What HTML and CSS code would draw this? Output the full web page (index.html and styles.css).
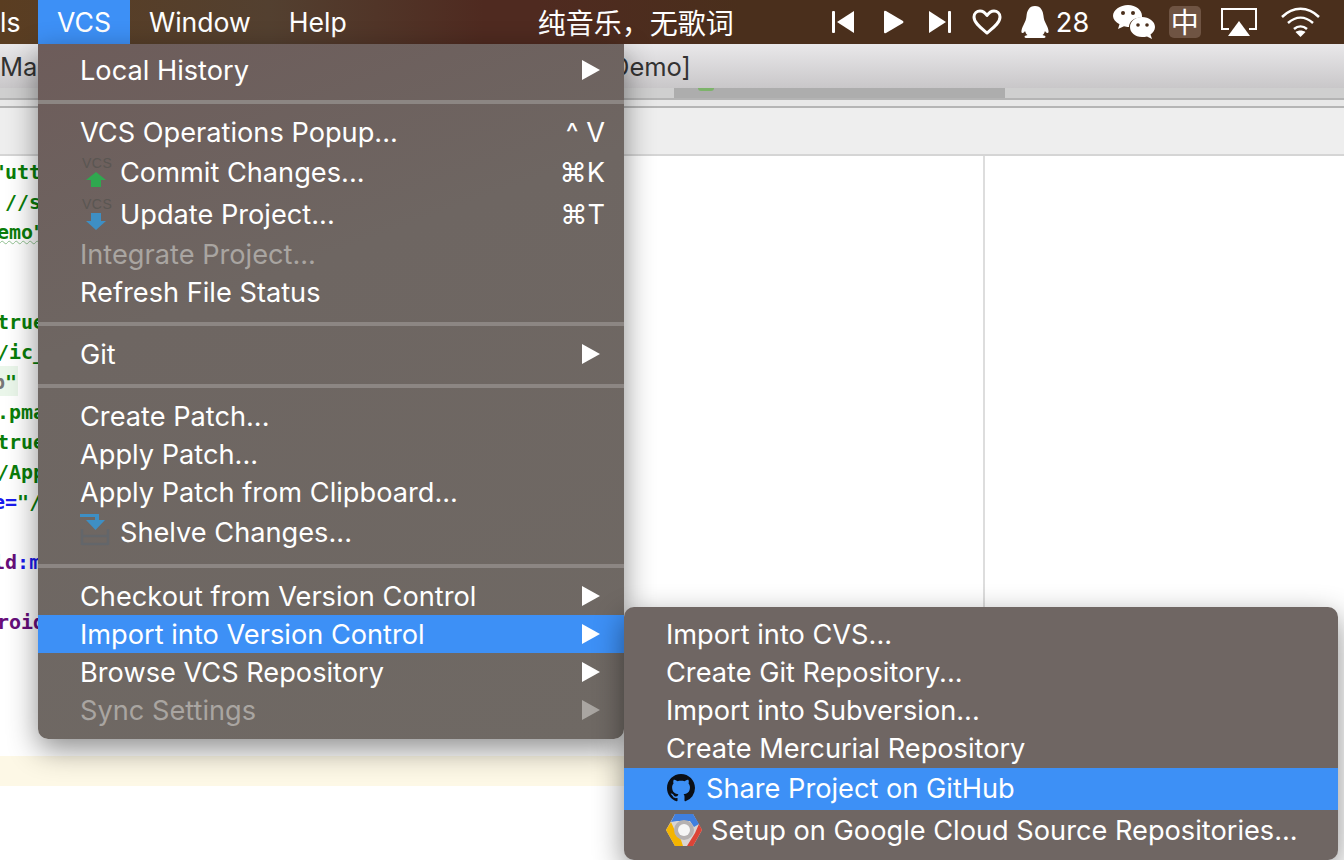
FILE: index.html
```html
<!DOCTYPE html>
<html lang="en">

<head>
    <meta charset="UTF-8">
    <meta name="viewport" content="width=device-width, initial-scale=1.0">
    <title>VCS menu</title>
    <link rel="stylesheet" href="styles.css">
</head>

<body>
    <div class="menubar">
        <div class="barItem barClipped">ls</div>
        <div class="barItem barActive">VCS</div>
        <div class="barItem">Window</div>
        <div class="barItem">Help</div>
        <div class="lyric">纯音乐，无歌词</div>
        <div class="tray">
            <svg class="trayPrev" width="24" height="24" viewBox="0 0 24 24"><rect x="1" y="1" width="3" height="22" rx="1" fill="#fff"/><path d="M23 1v22L6 12z" fill="#fff"/></svg>
            <svg class="trayPlay" width="21" height="24" viewBox="0 0 21 24"><path d="M1 2q0-2 2-1l17 10q1 1 0 2L3 23q-2 1-2-1z" fill="#fff"/></svg>
            <svg class="trayNext" width="24" height="24" viewBox="0 0 24 24"><path d="M1 1v22l17-11z" fill="#fff"/><rect x="20" y="1" width="3" height="22" rx="1" fill="#fff"/></svg>
            <svg class="trayHeart" width="30" height="26" viewBox="0 0 30 26"><path d="M15 24C9 19 2 14 2 8c0-4 3-6 6-6 3 0 5 1.500 7 4.500C17 3.500 19 2 22 2c3 0 6 2 6 6 0 6-7 11-13 16z" fill="none" stroke="#fff" stroke-width="3" stroke-linejoin="round"/></svg>
            <svg class="trayQQ" width="28" height="32" viewBox="0 0 28 32"><path d="M14 0c6 0 8 5 8.500 10 .2 3 1 5 3 9 2 4 3 8 1 8-1 0-2-1-2.500-2-.5 1.500-1 3-2.500 4 2 .5 3 1 3 2 0 1-2 1-4 1h-13c-2 0-4 0-4-1 0-1 1-1.500 3-2-1.500-1-2-2.500-2.500-4-.5 1-1.500 2-2.500 2-2 0-1-4 1-8 2-4 2.800-6 3-9C6 5 8 0 14 0z" fill="#fff"/></svg>
            <span class="trayCount">28</span>
            <svg class="trayWechat" width="42" height="34" viewBox="0 0 42 34"><path d="M15 0c8 0 14 5 14 11 0 .5 0 1-.1 1.500C22 12 16 16 16 22c-2 0-3.500-.2-5-.7L5 24l1.500-4.700C2.500 17 0 14 0 11 0 5 7 0 15 0z" fill="#fff"/><path d="M29 12c7 0 13 4.500 13 10 0 3-2 5.500-4.500 7.500L39 34l-5-2.500c-1.500.4-3.200.6-5 .6-7 0-12-4.500-12-10s5-10.100 12-10.100z" fill="#fff"/><circle cx="10" cy="8" r="2" fill="#4a2f1c"/><circle cx="20" cy="8" r="2" fill="#4a2f1c"/><circle cx="25" cy="20" r="1.800" fill="#4a2f1c"/><circle cx="34" cy="20" r="1.800" fill="#4a2f1c"/></svg>
            <span class="trayIme">中</span>
            <svg class="trayAir" width="36" height="28" viewBox="0 0 36 28"><path d="M8 21H1V1h34v20h-7" fill="none" stroke="#fff" stroke-width="2"/><path d="M18 13l11 15H7z" fill="#fff"/></svg>
            <svg class="trayWifi" width="41" height="30" viewBox="0 0 41 30"><path d="M2 10C13-1 28-1 39 10M8 16c8-7 17-7 25 0M14 22c4-3.500 9-3.500 13 0" fill="none" stroke="#fff" stroke-width="2.500"/><path d="M20.500 30l-5-5c3-2 7-2 10 0z" fill="#fff"/></svg>
        </div>
    </div>

    <div class="titlebar">
        <span class="titleLeft">Ma</span>
        <span>Demo]</span>
    </div>
    <div class="tabs">
        <div class="tabsBlank"></div>
        <div class="tabDark"><span class="tabDot"></span></div>
    </div>
    <div class="tabGap"></div>
    <div class="toolbar"></div>

    <div class="editor">
        <div class="code">
            <div class="line"><span class="str">"utt</span></div>
            <div class="line"><span class="str"> //s</span></div>
            <div class="line lineShift"><span class="str squiggle">emo"</span></div>
            <div class="line"></div>
            <div class="line"></div>
            <div class="line lineShift"><span class="str">true</span></div>
            <div class="line lineShift"><span class="str">/ic_</span></div>
            <div class="line"><span class="matchBg"><span class="plain">p</span><span class="str">"</span></span></div>
            <div class="line lineShift"><span class="str">.pma</span></div>
            <div class="line lineShift"><span class="str">true</span></div>
            <div class="line lineShift"><span class="str">/App</span></div>
            <div class="line"><span class="attr">e=</span><span class="str">"/</span></div>
            <div class="line"></div>
            <div class="line"><span class="tag">ld</span><span class="attr">:m</span></div>
            <div class="line"></div>
            <div class="line lineShift"><span class="tag">roid</span></div>
            <div class="line"></div>
            <div class="line"></div>
            <div class="line"></div>
            <div class="line"></div>
            <div class="line lineCurrent"></div>
        </div>
        <div class="side"></div>
    </div>

    <div class="menu mainMenu">
        <div class="item"><span class="label">Local History</span><span class="arrow"></span></div>
        <div class="sep"></div>
        <div class="item"><span class="label">VCS Operations Popup...</span><span class="key">^ V</span></div>
        <div class="item itemIcon">
            <svg class="icon" width="40" height="42" viewBox="0 0 40 42"><text class="iconText" x="2" y="17">VCS</text><path d="M16 21l10 8h-5v7h-10v-7h-5z" fill="#2fa84f"/></svg>
            <span class="label">Commit Changes...</span><span class="key">⌘K</span>
        </div>
        <div class="item itemIcon">
            <svg class="icon" width="40" height="42" viewBox="0 0 40 42"><text class="iconText" x="2" y="16">VCS</text><path d="M11 20h10v8h5l-10 9-10-9h5z" fill="#3e8fc4"/></svg>
            <span class="label">Update Project...</span><span class="key">⌘T</span>
        </div>
        <div class="item itemOff"><span class="label">Integrate Project...</span></div>
        <div class="item"><span class="label">Refresh File Status</span></div>
        <div class="sep"></div>
        <div class="item"><span class="label">Git</span><span class="arrow"></span></div>
        <div class="sep"></div>
        <div class="item"><span class="label">Create Patch...</span></div>
        <div class="item"><span class="label">Apply Patch...</span></div>
        <div class="item"><span class="label">Apply Patch from Clipboard...</span></div>
        <div class="item itemIcon">
            <svg class="icon" width="40" height="42" viewBox="0 0 40 42"><path d="M2 18v16M28 18v16M2 25h26M2 33h26" fill="none" stroke="#63666a" stroke-width="2.500"/><path d="M-1 3h20v6h6l-9.500 10L6 9h9V6H-1z" fill="#3e8fc4"/></svg>
            <span class="label">Shelve Changes...</span>
        </div>
        <div class="sep"></div>
        <div class="item"><span class="label">Checkout from Version Control</span><span class="arrow"></span></div>
        <div class="item itemActive"><span class="label">Import into Version Control</span><span class="arrow"></span></div>
        <div class="item"><span class="label">Browse VCS Repository</span><span class="arrow"></span></div>
        <div class="item itemOff"><span class="label">Sync Settings</span><span class="arrow"></span></div>
    </div>

    <div class="menu subMenu">
        <div class="item"><span class="label">Import into CVS...</span></div>
        <div class="item"><span class="label">Create Git Repository...</span></div>
        <div class="item"><span class="label">Import into Subversion...</span></div>
        <div class="item"><span class="label">Create Mercurial Repository</span></div>
        <div class="item itemIcon itemActive itemShare">
            <svg class="iconGit" width="40" height="28" viewBox="0 0 16 16" preserveAspectRatio="xMinYMid"><path fill-rule="evenodd" fill="#0b0f16" d="M8 0C3.580 0 0 3.580 0 8c0 3.540 2.290 6.530 5.470 7.590.4.070.55-.17.55-.38 0-.19-.01-.82-.01-1.490-2.010.37-2.530-.49-2.690-.94-.09-.23-.48-.94-.82-1.130-.28-.15-.68-.52-.01-.53.63-.01 1.080.58 1.230.82.72 1.210 1.870.87 2.330.66.07-.52.28-.87.51-1.070-1.780-.2-3.640-.89-3.640-3.950 0-.87.31-1.590.82-2.150-.08-.2-.36-1.020.08-2.120 0 0 .67-.21 2.200.82.64-.18 1.320-.27 2-.27.68 0 1.360.09 2 .27 1.530-1.040 2.200-.82 2.200-.82.44 1.100.16 1.920.08 2.120.51.56.82 1.270.82 2.150 0 3.070-1.870 3.750-3.650 3.950.29.25.54.73.54 1.480 0 1.070-.01 1.930-.01 2.200 0 .21.15.46.55.38A8.013 8.013 0 0016 8c0-4.420-3.580-8-8-8z"/></svg>
            <span class="label">Share Project on GitHub</span>
        </div>
        <div class="item itemCloud">
            <svg class="iconCloud" width="45" height="34" viewBox="0 0 45 34"><path d="M9 1h18l9 16-9 16H9L0 17z" fill="#d9d5d3"/><path d="M9 1h18l6 10-5 3-4-6H11l-6 1z" fill="#3f7fe0"/><path d="M33 11l3 6-9 16h-6l8-13z" fill="#dc4437"/><path d="M5 9l5 11 5 7 2 6H9L0 17z" fill="#f4b400"/><circle cx="18" cy="17" r="10" fill="#b5b1b1"/><circle cx="18" cy="17" r="6" fill="#f6f6f6"/></svg>
            <span class="label">Setup on Google Cloud Source Repositories...</span>
        </div>
    </div>
</body>

</html>
```

FILE: styles.css
```css
* {
    padding: 0;
    margin: 0;
    box-sizing: border-box;
}

html,
body {
    width: 1344px;
    height: 860px;
    overflow: hidden;
    background-color: #fff;
}

body {
    position: relative;
    font-family: "Inter", "Noto Sans CJK SC", sans-serif;
    font-size: 27.2px;
    color: #fff;
}

.menubar {
    display: flex;
    align-items: center;
    height: 44px;
    background: linear-gradient(90deg, #5a3d21 0, #534030 20%, #4f2a20 36%, #4f2a20 40%, #4a2f1c 55%, #4a2f1c 100%);
}
.barItem {
    height: 44px;
    line-height: 44px;
    padding: 0 19px;
    font-size: 26.6px;
}
.barClipped {
    width: 38px;
    padding: 0;
}
.barActive {
    background-color: #3d90f6;
}
.lyric {
    margin-left: 172px;
    width: 293px;
    font-family: "Noto Sans CJK SC", sans-serif;
    font-size: 28px;
}
.tray {
    display: flex;
    align-items: center;
    height: 44px;
}
.tray svg {
    flex: none;
}
.trayPlay {
    margin-left: 28px;
}
.trayNext {
    margin-left: 24px;
}
.trayHeart {
    margin-left: 20px;
}
.trayQQ {
    margin-left: 19px;
}
.trayCount {
    margin-left: 7px;
    width: 32px;
}
.trayWechat {
    margin-left: 25px;
}
.trayIme {
    margin-left: 14px;
    width: 32px;
    height: 32px;
    line-height: 30px;
    text-align: center;
    font-family: "Noto Sans CJK SC", sans-serif;
    font-size: 28px;
    background-color: #6f5443;
    border-radius: 5px;
}
.trayAir {
    margin-left: 20px;
}
.trayWifi {
    margin-left: 23px;
}

.titlebar {
    display: flex;
    align-items: center;
    height: 44px;
    font-size: 25.5px;
    color: #333;
    background: linear-gradient(#e9e8ea, #c9c7c9);
}
.titleLeft {
    width: 611px;
}
.tabs {
    display: flex;
    height: 12px;
    background-color: #cfcfcf;
    border-bottom: 2px solid #b4b4b4;
}
.tabsBlank {
    width: 674px;
}
.tabDark {
    width: 331px;
    background-color: #adadad;
}
.tabDot {
    display: block;
    width: 16px;
    height: 3px;
    margin-left: 24px;
    background-color: #7db36b;
    border-radius: 0 0 8px 8px;
}
.tabGap {
    height: 8px;
    background-color: #e8e8e8;
    border-bottom: 2px solid #b5b5b5;
}
.toolbar {
    height: 48px;
    background-color: #eee;
    border-bottom: 2px solid #d5d5d5;
}

.editor {
    display: flex;
    height: 704px;
}
.code {
    width: 985px;
    overflow: hidden;
    border-right: 2px solid #ddd;
    font-family: "DejaVu Sans Mono", monospace;
    font-size: 20px;
    font-weight: bold;
}
.line {
    height: 30px;
    line-height: 33px;
    white-space: pre;
    margin-left: -7px;
}
.lineShift {
    margin-left: -3px;
}
.lineCurrent {
    margin-left: 0;
    background-color: #fdf8e6;
}
.side {
    flex: 1;
}
.str {
    color: #0a7d0a;
}
.attr {
    color: #1a1aee;
}
.tag {
    color: #660e7a;
}
.plain {
    color: #777;
}
.matchBg {
    display: inline-block;
    width: 25px;
    height: 30px;
    background-color: #eaf6ea;
}
.squiggle {
    text-decoration: underline wavy #8fbf8f 1px;
}

.menu {
    position: absolute;
    background: linear-gradient(160deg, #6d5c5a 0, #6e6662 35%, #6f6964 100%);
    box-shadow: 0 10px 30px rgba(0, 0, 0, .45);
}
.mainMenu {
    left: 38px;
    top: 44px;
    width: 586px;
    height: 695px;
    padding: 7px 0 10px;
    border-radius: 0 0 10px 10px;
}
.subMenu {
    left: 624px;
    top: 607px;
    width: 714px;
    height: 253px;
    padding-top: 8px;
    border-radius: 10px;
    background: #6f6663;
}
.item {
    display: flex;
    align-items: center;
    height: 38px;
    padding: 0 24px 0 42px;
}
.itemIcon {
    height: 42px;
}
.itemShare {
    margin-top: 1px;
    padding-bottom: 2px;
}
.itemCloud {
    height: 40px;
}
.itemActive {
    background-color: #3d90f6;
}
.itemOff {
    color: #a9a5a1;
}
.label {
    flex: 1;
    white-space: nowrap;
}
.icon,
.iconGit,
.iconCloud {
    flex: none;
}
.iconGit {
    margin-left: 1px;
    margin-right: -1px;
}
.iconText {
    font-family: "Liberation Sans", sans-serif;
    font-size: 14px;
    letter-spacing: .5px;
    fill: #5a5652;
}
.arrow {
    width: 0;
    height: 0;
    border-left: 18px solid #fff;
    border-top: 10px solid transparent;
    border-bottom: 10px solid transparent;
}
.itemOff .arrow {
    border-left-color: #a9a5a1;
}
.key {
    margin-right: -5px;
}
.sep {
    height: 4px;
    margin: 11px 0 9px;
    background-color: #8c8683;
}
```
